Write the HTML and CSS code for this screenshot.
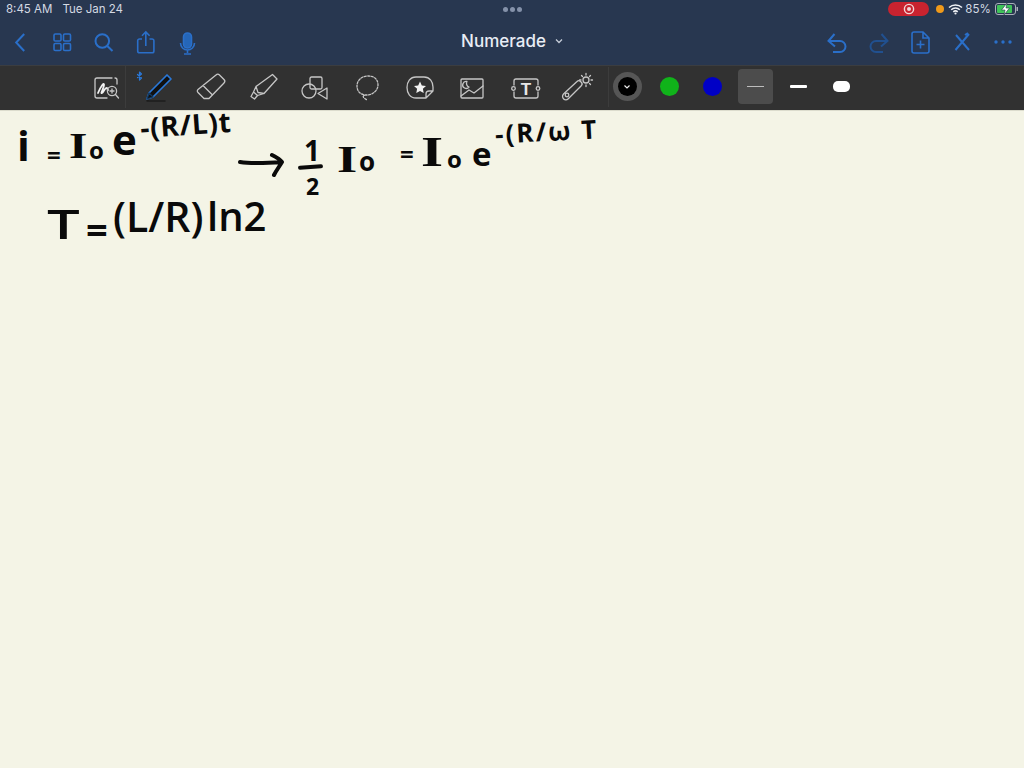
FILE: index.html
```html
<!DOCTYPE html>
<html lang="en">
<head>
<meta charset="utf-8">
<title>Numerade</title>
<link rel="stylesheet" href="styles.css">
</head>
<body>
<header class="top">
  <div class="status">
    <div class="status-left"><span>8:45 AM</span><span>Tue Jan 24</span></div>
    <div class="grabber"><i></i><i></i><i></i></div>
    <div class="status-right">
      <span class="rec"><svg width="14" height="14" viewBox="0 0 14 14"><circle cx="7" cy="7" r="4.6" fill="none" stroke="#f3d6d8" stroke-width="1.4"/><circle cx="7" cy="7" r="2" fill="#f3d6d8"/></svg></span>
      <span class="orange"></span>
      <svg class="wifi" width="15" height="12" viewBox="0 0 15 12"><path d="M1 4.5a9.5 9.5 0 0 1 13 0M3.2 6.8a6.2 6.2 0 0 1 8.6 0M5.3 8.9a3.2 3.2 0 0 1 4.4 0" fill="none" stroke="#f0f2f6" stroke-width="1.5"/><circle cx="7.5" cy="10.5" r="1.1" fill="#f0f2f6"/></svg>
      <span class="pct">85%</span>
      <svg width="23" height="12" viewBox="0 0 23 12"><rect x=".5" y=".5" width="20" height="11" rx="2.5" fill="none" stroke="#aab0ba"/><rect x="2" y="2" width="15" height="8" rx="1" fill="#3fc45a"/><rect x="21.5" y="4" width="1.5" height="4" fill="#aab0ba"/><path d="M12 0 6.5 7h3.5L9 12l5.5-7H11z" fill="#fff" stroke="#26354e" stroke-width=".6"/></svg>
    </div>
  </div>
  <nav class="nav">
    <div class="nav-side">
      <span class="nav-btn"><svg class="nav-ic" viewBox="0 0 24 24"><path d="M15.2 4 7.2 12.5l8 8.5"/></svg></span>
      <span class="nav-btn"><svg class="nav-ic thin" viewBox="0 0 24 24"><rect x="4" y="4" width="7" height="7" rx="1.3"/><rect x="13.5" y="4" width="7" height="7" rx="1.3"/><rect x="4" y="13.5" width="7" height="7" rx="1.3"/><rect x="13.5" y="13.5" width="7" height="7" rx="1.3"/></svg></span>
      <span class="nav-btn"><svg class="nav-ic" viewBox="0 0 24 24"><circle cx="10.3" cy="11" r="6.8"/><path d="M15.3 16 20.5 21"/></svg></span>
      <span class="nav-btn"><svg class="nav-ic thin" viewBox="0 0 24 24"><path d="M9 9H6.5A1.8 1.8 0 0 0 4.7 10.800V21a1.800 1.800 0 0 0 1.800 1.800h12.600a1.800 1.800 0 0 0 1.800-1.800V10.800A1.800 1.800 0 0 0 19.100 9H16.500M12.800 2v14M9 5.800l3.800-3.800 3.800 3.800"/></svg></span>
      <span class="nav-btn"><svg class="nav-ic thin" viewBox="0 0 24 24"><rect class="mic" x="8.500" y="3" width="8" height="15" rx="4"/><path d="M5.500 13a7 7 0 0 0 14 0M12.500 20v3M9 24h7"/></svg></span>
    </div>
    <div class="nav-title">Numerade<svg class="caret" width="8" height="6" viewBox="0 0 8 6"><path d="M1 1.500 4 4.500 7 1.500"/></svg></div>
    <div class="nav-side nav-end">
      <span class="nav-btn"><svg class="nav-ic" viewBox="0 0 24 24"><path d="M9.500 4 3.500 11l6.500 5.500M3.500 11H15a5.500 5.500 0 0 1 0 11H8"/></svg></span>
      <span class="nav-btn"><svg class="nav-ic dim" viewBox="0 0 24 24"><path d="M14.500 4l6 7-6.500 5.500M20.500 11H9a5.500 5.500 0 0 0 0 11h7"/></svg></span>
      <span class="nav-btn"><svg class="nav-ic thin" viewBox="0 0 24 24"><path d="M6 2h9l6 6v13a2 2 0 0 1-2 2H6a2 2 0 0 1-2-2V4a2 2 0 0 1 2-2zM15 2v6h6M12.500 10.500v8M8.500 14.500h8"/></svg></span>
      <span class="nav-btn"><svg class="nav-ic" viewBox="0 0 24 24"><path d="M6 5 19 20M19 4 5.500 20M15 5l3-2"/></svg></span>
      <span class="nav-btn"><svg class="nav-ic fill" viewBox="0 0 24 24"><circle cx="5" cy="12" r="1.700"/><circle cx="12" cy="12" r="1.700"/><circle cx="19" cy="12" r="1.700"/></svg></span>
    </div>
  </nav>
</header>
<div class="tools">
  <span class="tool tool-first"><svg class="t-ic" viewBox="0 0 32 32"><path d="M22 7H7a2 2 0 0 0-2 2v16a2 2 0 0 0 2 2h10M27 13V9a2 2 0 0 0-2-2"/><path class="w" d="M8 22c3-7 6-11 6-8s-4 9-2 8 3-6 5-5c1 .6 0 2 1 2"/><circle cx="22" cy="20" r="4.600"/><path d="M25.500 23.500 28.500 27M22 18v4M20 20h4"/></svg></span>
  <span class="tool"><svg class="t-ic" viewBox="0 0 32 32"><path class="bt" d="M-4.500 3.500-.5 7-2.500 9V1l2 2-4 3.500"/><path d="M7 27 5 30h18" class="shadow"/><path class="pen" d="M25 4 29 8 11 26 5 28 7 22z"/><path class="pen-tip" d="M7 22 5 28 11 26z"/></svg></span>
  <span class="tool"><svg class="t-ic" viewBox="0 0 32 32"><path d="M22 4a2.500 2.500 0 0 1 3.500 0l4.500 4.500a2.500 2.500 0 0 1 0 3.500L15 27.500H10L4 21.500a2 2 0 0 1 0-3zM9 14.500 18.500 24M10 27.500 7 24.500"/></svg></span>
  <span class="tool"><svg class="t-ic" viewBox="0 0 32 32"><path d="M26.500 3.500 31 8 18 22.500l-6-1-2-6zM10 15.500 7.500 21l4 3.500 6.500-2M7.500 21 5 25.500l3.500 2.500 3-3.500"/></svg></span>
  <span class="tool"><svg class="t-ic" viewBox="0 0 32 32"><rect x="12" y="6" width="12" height="12" rx="1.500"/><circle cx="11" cy="20" r="7"/><path d="M29 17v11l-9-5.500z"/></svg></span>
  <span class="tool"><svg class="t-ic" viewBox="0 0 32 32"><path class="dash" d="M17 24c-7 0-10-4-10-9s4-10 11-10 10 4 10 9-5 10-11 10c-3 0-5 1-3 3l3 2"/></svg></span>
  <span class="tool"><svg class="t-ic" viewBox="0 0 32 32"><path d="M22 27h-8C8 27 5 22 5 16.500S8 6 14 6h8c6 0 9 5 9 10v4l-7 7zM24 27v-4a3 3 0 0 1 3-3h4"/><path class="star" d="M18 10.500l1.800 3.900 4.200.5-3.100 2.900.8 4.200-3.700-2.100-3.700 2.100.8-4.200-3.100-2.900 4.200-.5z"/></svg></span>
  <span class="tool"><svg class="t-ic" viewBox="0 0 32 32"><rect x="7" y="8" width="22" height="19" rx="1"/><path d="M7 25 15 19l5 3 9-7M13 10.500a3.500 3.500 0 1 0 2 5.500 3.800 3.800 0 0 1-2-5.500z"/></svg></span>
  <span class="tool"><svg class="t-ic" viewBox="0 0 32 32"><path d="M8 14v-4a2 2 0 0 1 2-2h20a2 2 0 0 1 2 2v4M8 21v4a2 2 0 0 0 2 2h20a2 2 0 0 0 2-2v-4"/><circle cx="7.500" cy="17.500" r="1.800"/><circle cx="32" cy="17.500" r="1.800"/><text class="t-glyph" x="20" y="23.500" text-anchor="middle">T</text></svg></span>
  <span class="tool"><svg class="t-ic" viewBox="0 0 32 32"><path d="M5.500 23 19 10.500a2.500 2.500 0 0 1 3.500 0l.8.800a2.500 2.500 0 0 1 0 3.500L10 28a3 3 0 0 1-4.300 0 3.500 3.500 0 0 1-.2-5z"/><circle cx="9" cy="24" r="1.800"/><circle cx="28" cy="9" r="3"/><path d="M28 2.500v1.500M28 14v1.500M21.500 9H23M33 9h1.500M23.500 4.500l1 1M31.500 12.500l1 1M32.500 4.500l-1 1"/></svg></span>
  <span class="sep"></span>
  <span class="swatch swatch-first"><span class="ring"><svg width="8" height="6" viewBox="0 0 8 6"><path d="M1.500 1.500 4 4l2.500-2.500" fill="none" stroke="#eee" stroke-width="1.200"/></svg></span></span>
  <span class="swatch"><span class="dot green"></span></span>
  <span class="swatch"><span class="dot blue"></span></span>
  <span class="swatch"><span class="width-on"><span class="stroke s1"></span></span></span>
  <span class="swatch"><span class="stroke s2"></span></span>
  <span class="swatch"><span class="stroke s3"></span></span>
</div>
<main class="canvas">
  <span class="ink i1">i</span>
  <span class="ink eq eq1">=</span>
  <span class="ink cap c1">I</span>
  <span class="ink o o1">o</span>
  <span class="ink e e1">e</span>
  <span class="ink sup s-a">-(R/L)t</span>
  <svg class="arrow" width="50" height="30" viewBox="0 0 50 30"><path d="M2 8C15 10 30 9 44 8M34 1c4 2 8 4 10 7-3 5-6 9-8 13"/></svg>
  <span class="ink num">1</span>
  <span class="bar"></span>
  <span class="ink den">2</span>
  <span class="ink cap c2">I</span>
  <span class="ink o o2">o</span>
  <span class="ink eq eq2">=</span>
  <span class="ink cap c3">I</span>
  <span class="ink o o3">o</span>
  <span class="ink e e2">e</span>
  <span class="ink sup s-b">-(R/ω T</span>
  <span class="ink t-big">T</span>
  <span class="ink eq eq3">=</span>
  <span class="ink line2">(L/R)</span>
  <span class="ink line2b">ln2</span>
</main>
</body>
</html>
```

FILE: styles.css
```css
* { box-sizing: border-box; }
html, body { margin: 0; height: 100%; }
body {
  width: 1024px; height: 768px; overflow: hidden;
  display: flex; flex-direction: column;
  font-family: "Inter", "Liberation Sans", sans-serif;
  background: #f4f4e6;
}
.top { background: #283750; height: 65px; display: flex; flex-direction: column; }
.status {
  height: 18px; padding: 0 6px 0 6px;
  display: grid; grid-template-columns: 1fr auto 1fr; align-items: center;
  color: #d5dae3; font-size: 11.5px;
}
.status-left { display: flex; gap: 10px; }
.grabber { display: flex; gap: 2px; }
.grabber i { width: 5px; height: 5px; border-radius: 50%; background: #8592aa; }
.status-right { display: flex; align-items: center; justify-content: flex-end; gap: 4px; }
.rec {
  width: 41px; height: 14px; border-radius: 7px; background: #c9232f;
  display: flex; align-items: center; justify-content: center; margin-right: 3px;
}
.orange { width: 8px; height: 8px; border-radius: 50%; background: #f09a1a; }
.wifi { margin-right: -2px; }
.pct { font-size: 11.5px; letter-spacing: .1px; }
.nav {
  flex: 1; display: grid; grid-template-columns: 1fr auto 1fr; align-items: center;
}
.nav-side { display: flex; }
.nav-end { justify-content: flex-end; }
.nav-btn { width: 41.5px; height: 46px; display: flex; align-items: center; justify-content: center; }
.nav-ic { width: 24px; height: 24px; fill: none; stroke: #2a6fc9; stroke-width: 2; overflow: visible; }
.nav-ic.thin { stroke-width: 1.6; }
.nav-ic.dim { stroke: #21508f; }
.nav-ic.fill { fill: #2a6fc9; stroke: none; }
.nav-ic .mic { fill: #2566b8; }
.nav-title {
  color: #e8edf5; font-size: 17px; font-weight: 500;
  display: flex; align-items: center; gap: 9px; padding-bottom: 1px;
}
.caret { fill: none; stroke: #c5ccd8; stroke-width: 1.300; }
.tools {
  height: 45px; background: #313131; border-top: 1px solid #3b3d40;
  padding: 0 0 3px 80px; display: flex; align-items: center;
}
.tool { width: 52px; height: 42px; display: flex; align-items: center; justify-content: center; }
.tool-first { width: 46px; padding-left: 6px; margin-right: 6px; border-right: 1px solid #3c3c3c; }
.t-ic { width: 32px; height: 32px; fill: none; stroke: #c6c6c6; stroke-width: 1.300; overflow: visible; stroke-linejoin: round; stroke-linecap: round; }
.t-ic .w { stroke: #f2f2f2; stroke-width: 1.800; }
.t-ic .bt { stroke: #2a78d8; stroke-width: 1.200; }
.t-ic .pen { fill: #111; stroke: #2a78d8; stroke-width: 1.700; }
.t-ic .pen-tip { fill: #111; stroke: #14395f; }
.t-ic .shadow { stroke: #1c1c1c; stroke-width: 1.500; }
.t-ic .dash { stroke-dasharray: 2 1.500; }
.t-ic .star { fill: #f2f2f2; stroke: none; }
.t-glyph { font: 700 17px "Liberation Sans", sans-serif; fill: #e6e6e6; stroke: none; }
.sep { width: 1px; height: 40px; background: #3c3c3c; margin-left: 8px; }
.swatch { width: 43px; height: 42px; display: flex; align-items: center; justify-content: center; }
.swatch-first { width: 39px; padding-right: 3px; }
.ring {
  width: 19px; height: 19px; border-radius: 50%; background: #000;
  box-shadow: 0 0 0 5px #565656;
  display: flex; align-items: center; justify-content: center;
}
.dot { width: 19px; height: 19px; border-radius: 50%; }
.green { background: #10b31a; }
.blue { background: #0000c6; }
.width-on {
  width: 35px; height: 35px; border-radius: 4px; background: #4c4c4c;
  display: flex; align-items: center; justify-content: center;
}
.stroke { width: 17px; display: block; }
.s1 { height: 1.500px; background: #bdbdbd; }
.s2 { height: 3px; background: #fff; border-radius: 1px; }
.s3 { height: 11px; background: #fff; border-radius: 5px; }
.canvas { flex: 1; position: relative; background: #f4f4e6; border-top: 1px solid #dcdccd; }
.ink {
  position: absolute; line-height: 1; color: #0a0a0a; white-space: nowrap;
  font-family: "Open Sans", "Liberation Sans", sans-serif; font-weight: 700;
}
.cap { font-family: "Liberation Serif", serif; font-weight: 700; transform-origin: left center; }
.i1 { left: 17px; top: 13px; font-size: 42px; }
.eq { font-size: 24px; }
.eq1 { left: 47px; top: 32px; }
.eq2 { left: 400px; top: 31px; }
.eq3 { left: 86px; top: 99px; font-size: 38px; }
.c1 { left: 69px; top: 18px; font-size: 35px; transform: scaleX(1.35); }
.o { font-size: 24px; }
.o1 { left: 89px; top: 27px; }
.e { font-size: 44px; }
.e1 { left: 112px; top: 7px; font-size: 42px; }
.sup { letter-spacing: .5px; }
.s-a { left: 140px; top: -1px; transform: rotate(-4deg); font-size: 28px; letter-spacing: .8px; }
.arrow { position: absolute; left: 238px; top: 43px; overflow: visible; fill: none; stroke: #0a0a0a; stroke-width: 4; stroke-linecap: round; stroke-linejoin: round; }
.num { left: 304px; top: 25px; font-size: 28px; }
.bar { position: absolute; left: 298px; top: 54px; width: 25px; height: 4px; border-radius: 2px; background: #0a0a0a; transform: rotate(-4deg); }
.den { left: 306px; top: 64px; font-size: 23px; }
.c2 { left: 337px; top: 30px; font-size: 37px; transform: scaleX(1.4); }
.o2 { left: 359px; top: 37px; font-size: 26px; }
.c3 { left: 421px; top: 20px; font-size: 42px; transform: scaleX(1.35); }
.o3 { left: 447px; top: 36px; }
.e2 { left: 472px; top: 26px; font-size: 33px; }
.s-b { left: 495px; top: 7px; transform: rotate(-3deg); font-size: 26px; letter-spacing: 2px; }
.t-big { left: 47px; top: 93px; font-size: 40px; font-weight: 600; transform: scaleX(1.45); transform-origin: left center; }
.line2 { left: 113px; top: 85px; font-size: 41px; font-weight: 600; }
.line2b { left: 207px; top: 85px; font-size: 40px; font-weight: 600; }
```
